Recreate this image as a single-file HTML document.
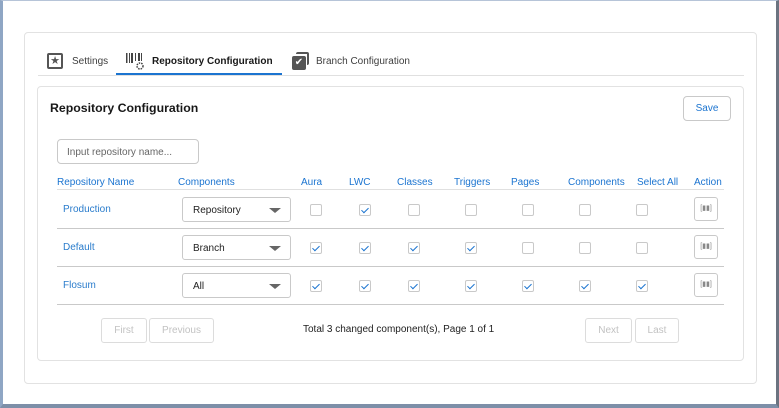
<!DOCTYPE html>
<html><head><style>
*{box-sizing:border-box;margin:0;padding:0}
body{width:779px;height:408px;overflow:hidden;background:#fff;font-family:"Liberation Sans",sans-serif;font-size:10px;color:#181818;position:relative}
.frame{position:absolute;left:0;top:0;width:779px;height:408px;border-left:3px solid #8fa6c4;border-top:1px solid #b6c4d8;border-right:3px solid #6b7380;border-bottom:4px solid #7d8fa8}
.a{position:absolute}
.card{position:absolute;border:1px solid #e2e2e2;border-radius:4px;background:#fff}
.tab{position:absolute;top:56px;font-size:10px;color:#3e3e3e}
.hd{position:absolute;top:177px;color:#1b74d0;font-size:10px;white-space:nowrap}
.cb{position:absolute;width:12px;height:12px;border:1px solid #c9c9c9;border-radius:2px;background:#fff}
.cb.c::after{content:"";position:absolute;left:3px;top:1px;width:3px;height:6px;border:solid #1b74d0;border-width:0 1.6px 1.6px 0;transform:rotate(45deg)}
.sel{position:absolute;left:182px;width:109px;height:25px;border:1px solid #c9c9c9;border-radius:3px;padding:7px 0 0 10px;font-size:10px;color:#222}
.sel::after{content:"";position:absolute;right:9px;top:10px;border:5px solid transparent;border-top:5px solid #666;border-bottom:0;border-left-width:6px;border-right-width:6px}
.nm{position:absolute;left:63px;color:#2a7ccc}
.line{position:absolute;left:57px;width:667px;height:1px;background:#c9c9c9}
.act{position:absolute;left:694px;width:24px;height:24px;border:1px solid #c9c9c9;border-radius:3px;text-align:center;font-size:7px;color:#888;line-height:22px}
.btn{position:absolute;top:318px;height:25px;border:1px solid #dcdcdc;border-radius:3px;color:#c2c2c2;text-align:center;line-height:23px}
</style></head><body>
<div class="frame"></div>
<div class="card" style="left:24px;top:32px;width:733px;height:352px"></div>
<div class="a" style="left:47px;top:53px;width:16px;height:16px;border:2px solid #555;border-radius:2px;text-align:center;font-size:11px;line-height:12px;color:#555">★</div>
<div class="tab" style="left:72px">Settings</div>
<svg class="a" style="left:126px;top:52px" width="20" height="20"><g fill="#444"><rect x="0" y="1" width="1.5" height="10"/><rect x="3" y="1" width="1" height="10"/><rect x="5" y="1" width="2" height="10"/><rect x="9" y="1" width="1" height="8"/><rect x="12" y="1" width="2" height="8"/><rect x="15" y="1" width="1" height="8"/></g><circle cx="14" cy="14" r="3" fill="none" stroke="#444" stroke-width="1.5" stroke-dasharray="1.5 1"/></svg>
<div class="tab" style="left:152px;font-weight:bold;color:#181818">Repository Configuration</div>
<div class="a" style="left:116px;top:73px;width:166px;height:3px;background:#1b74d0"></div>
<div class="a" style="left:38px;top:75px;width:706px;height:1px;background:#e0e0e0"></div>
<div class="a" style="left:296px;top:52px;width:13px;height:13px;border:2px solid #555;border-radius:2px;border-left:0;border-bottom:0"></div>
<div class="a" style="left:292px;top:56px;width:14px;height:14px;background:#555;border-radius:2px;color:#fff;font-size:10px;text-align:center;line-height:14px">✔</div>
<div class="tab" style="left:316px">Branch Configuration</div>
<div class="card" style="left:37px;top:86px;width:707px;height:275px"></div>
<div class="a" style="left:50px;top:101px;font-size:12.3px;font-weight:bold">Repository Configuration</div>
<div class="a" style="left:683px;top:96px;width:48px;height:25px;border:1px solid #c9c9c9;border-radius:4px;color:#1b74d0;text-align:center;line-height:23px">Save</div>
<div class="a" style="left:57px;top:139px;width:142px;height:25px;border:1px solid #c9c9c9;border-radius:4px;padding:7px 0 0 9px;color:#666">Input repository name...</div>
<div class="hd" style="left:57px">Repository Name</div>
<div class="hd" style="left:178px">Components</div>
<div class="hd" style="left:301px">Aura</div>
<div class="hd" style="left:349px">LWC</div>
<div class="hd" style="left:397px">Classes</div>
<div class="hd" style="left:454px">Triggers</div>
<div class="hd" style="left:511px">Pages</div>
<div class="hd" style="left:568px">Components</div>
<div class="hd" style="left:637px">Select All</div>
<div class="hd" style="left:694px">Action</div>
<div class="line" style="top:189px;background:#e0e0e0"></div>
<div class="nm" style="top:204px">Production</div>
<div class="sel" style="top:197px">Repository</div>
<div class="line" style="top:228px"></div>
<div class="nm" style="top:242px">Default</div>
<div class="sel" style="top:235px">Branch</div>
<div class="line" style="top:266px"></div>
<div class="nm" style="top:280px">Flosum</div>
<div class="sel" style="top:273px">All</div>
<div class="line" style="top:304px"></div>
<div class="cb" style="left:310px;top:204px"></div><div class="cb c" style="left:359px;top:204px"></div><div class="cb" style="left:408px;top:204px"></div><div class="cb" style="left:465px;top:204px"></div><div class="cb" style="left:522px;top:204px"></div><div class="cb" style="left:579px;top:204px"></div><div class="cb" style="left:636px;top:204px"></div>
<div class="cb c" style="left:310px;top:242px"></div><div class="cb c" style="left:359px;top:242px"></div><div class="cb c" style="left:408px;top:242px"></div><div class="cb c" style="left:465px;top:242px"></div><div class="cb" style="left:522px;top:242px"></div><div class="cb" style="left:579px;top:242px"></div><div class="cb" style="left:636px;top:242px"></div>
<div class="cb c" style="left:310px;top:280px"></div><div class="cb c" style="left:359px;top:280px"></div><div class="cb c" style="left:408px;top:280px"></div><div class="cb c" style="left:465px;top:280px"></div><div class="cb c" style="left:522px;top:280px"></div><div class="cb c" style="left:579px;top:280px"></div><div class="cb c" style="left:636px;top:280px"></div>
<div class="act" style="top:197px">[▮▮]</div>
<div class="act" style="top:235px">[▮▮]</div>
<div class="act" style="top:273px">[▮▮]</div>
<div class="btn" style="left:101px;width:46px">First</div>
<div class="btn" style="left:149px;width:65px">Previous</div>
<div class="a" style="left:303px;top:324px;color:#222">Total 3 changed component(s), Page 1 of 1</div>
<div class="btn" style="left:585px;width:47px">Next</div>
<div class="btn" style="left:635px;width:44px">Last</div>
</body></html>
